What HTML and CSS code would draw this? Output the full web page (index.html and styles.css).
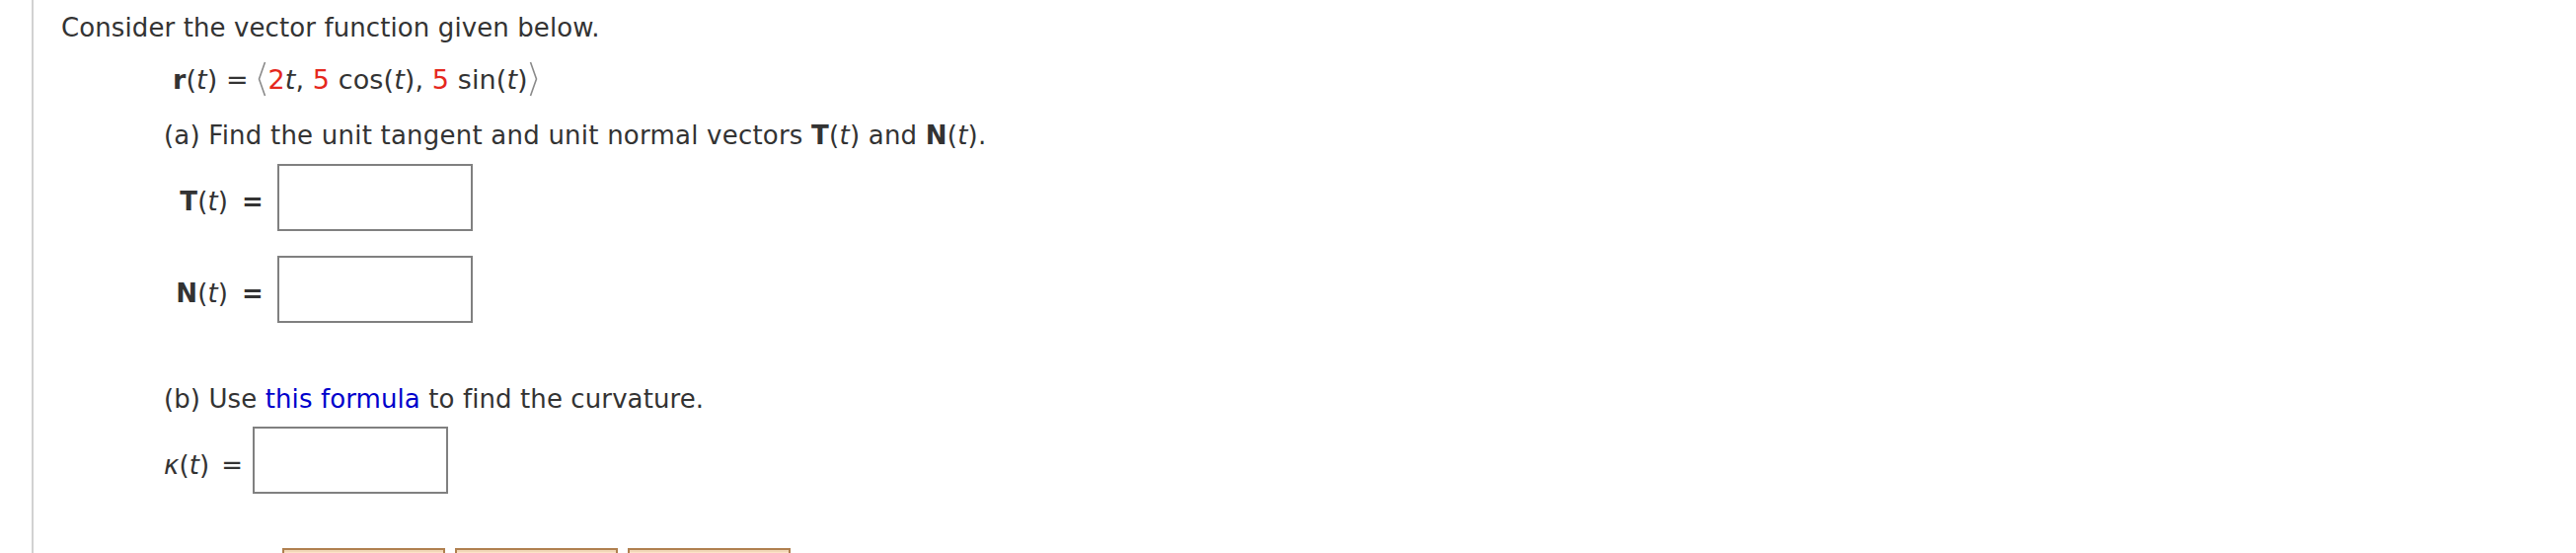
FILE: index.html
```html
<!DOCTYPE html>
<html lang="en">
<head>
<meta charset="utf-8">
<title>Vector function</title>
<link rel="stylesheet" href="styles.css">
</head>
<body>
<div class="page">
  <p class="intro">Consider the vector function given below.</p>
  <div class="eq"><b>r</b>(<i>t</i>) = <svg class="bracket" viewBox="0 0 9 36" width="9" height="36"><polyline points="7.5,1 1.5,18 7.5,35"/></svg><span class="red">2</span><i>t</i>, <span class="red">5</span> cos(<i>t</i>), <span class="red">5</span> sin(<i>t</i>)<svg class="bracket" viewBox="0 0 9 36" width="9" height="36"><polyline points="1.5,1 7.5,18 1.5,35"/></svg></div>
  <p class="part parta">(a) Find the unit tangent and unit normal vectors <b>T</b>(<i>t</i>) and <b>N</b>(<i>t</i>).</p>
  <div class="answers">
    <div class="arow">
      <span class="lbl"><b>T</b>(<i>t</i>)</span>
      <b class="eqsign">=</b>
      <input class="ans" type="text" aria-label="T(t)">
    </div>
    <div class="arow">
      <span class="lbl"><b>N</b>(<i>t</i>)</span>
      <b class="eqsign">=</b>
      <input class="ans" type="text" aria-label="N(t)">
    </div>
  </div>
  <p class="part partb">(b) Use <a class="link" href="#formula">this formula</a> to find the curvature.</p>
  <div class="krow">
    <span class="klbl"><i>κ</i>(<i>t</i>)</span>
    <span class="keq">=</span>
    <input class="ans" type="text" aria-label="kappa(t)">
  </div>
  <div class="buttons">
    <button class="btn" type="button"></button>
    <button class="btn" type="button"></button>
    <button class="btn" type="button"></button>
  </div>
</div>
</body>
</html>
```

FILE: styles.css
```css
html, body {
  margin: 0;
  padding: 0;
  background: #ffffff;
}

body {
  font-family: Verdana, "DejaVu Sans", sans-serif;
  font-size: 26px;
  letter-spacing: 0.1px;
  line-height: 30px;
  color: #333333;
}

.page {
  margin-left: 32px;
  border-left: 2px solid #d2d2d2;
  padding: 13px 0 0 28px;
  min-height: 620px;
  box-sizing: border-box;
}

p {
  margin: 0;
}

.intro {
  margin: 0;
}

.eq {
  margin: 23px 0 0 113px;
  font-size: 27px;
  white-space: nowrap;
}

.bracket {
  display: inline-block;
  margin: -6px 1px -8px;
  vertical-align: baseline;
}

.bracket polyline {
  fill: none;
  stroke: #8a8a8a;
  stroke-width: 1.6;
  stroke-linejoin: miter;
}

.red {
  color: #e5281d;
}

.part {
  margin: 26px 0 0 104px;
}

.parta {
  letter-spacing: 0.22px;
}

.answers {
  margin: 14px 0 0 104px;
  display: flex;
  flex-direction: column;
  gap: 25px;
}

.arow {
  display: flex;
  align-items: flex-start;
}

.lbl {
  width: 65px;
  text-align: right;
  padding-top: 23px;
  white-space: nowrap;
}

.eqsign {
  padding-top: 23px;
  margin-left: 14px;
  margin-right: 14px;
}

.ans {
  box-sizing: border-box;
  width: 198px;
  height: 68px;
  margin: 0;
  padding: 0 6px;
  border: 2px solid #808080;
  border-radius: 0;
  background: #ffffff;
  font: inherit;
  outline: none;
}

.partb {
  margin-top: 62px;
}

.link {
  color: #0000cc;
  text-decoration: none;
}

.krow {
  margin: 13px 0 0 104px;
  display: flex;
  align-items: flex-start;
}

.klbl {
  padding-top: 24px;
  white-space: nowrap;
}

.keq {
  padding-top: 24px;
  margin-left: 12px;
  margin-right: 10px;
}

.buttons {
  margin: 55px 0 0 224px;
  display: flex;
  gap: 10px;
}

.btn {
  width: 165px;
  height: 44px;
  margin: 0;
  padding: 0;
  border: 2px solid #b0804f;
  border-radius: 0;
  background: linear-gradient(#fde4c9, #f6cfa4);
  box-shadow: inset 0 2px 0 #f2d7b8;
}
```
